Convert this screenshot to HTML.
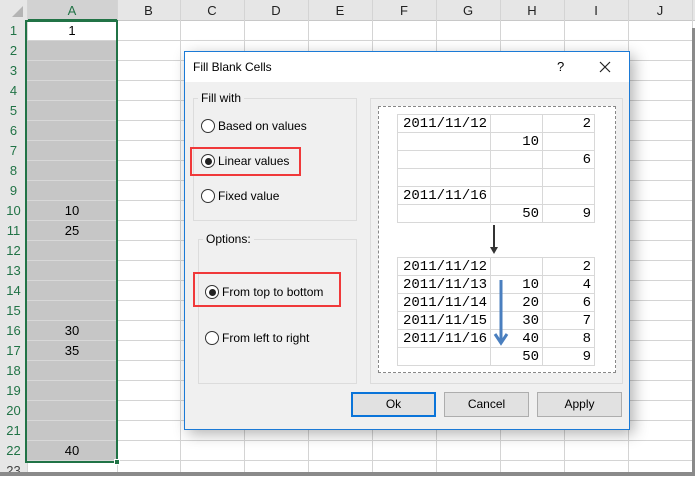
<!DOCTYPE html>
<html><head><style>
*{margin:0;padding:0;box-sizing:border-box}
body{width:695px;height:476px;overflow:hidden;background:#fff;position:relative;font-family:"Liberation Sans",sans-serif;font-size:12px;color:#000}
.a{position:absolute}
.vl{position:absolute;top:0;width:1px;height:472px;background:#d4d4d4}
.rh{position:absolute;left:0;width:27px;height:20px;text-align:center;line-height:20px;font-size:13px;color:#217346}
.ch{position:absolute;top:0;height:21px;line-height:21px;text-align:center;font-size:13px;color:#222}
.av{position:absolute;left:27px;width:90px;height:20px;text-align:center;line-height:20px;font-size:13px}
.grp{position:absolute;border:1px solid #dcdcdc}
.lab{position:absolute;background:#f0f0f0;padding:0 3px;font-size:12px}
.radio{position:absolute;font-size:12px;line-height:14px;padding-left:17px}
.radio:before{content:"";position:absolute;left:0;top:0;width:12px;height:12px;border:1px solid #333;border-radius:50%;background:#fff}
.radio.on:after{content:"";position:absolute;left:3.5px;top:3.5px;width:7px;height:7px;border-radius:50%;background:#222}
.red{position:absolute;border:2px solid #f0393a}
.pt{position:absolute;border-collapse:collapse;font-family:"Liberation Mono",monospace;font-size:14px}
.pt td{border:1px solid #d8d8d8;height:18px;padding:0 3px;text-align:right;line-height:16px}
.btn{position:absolute;height:25px;background:#e1e1e1;border:1px solid #adadad;text-align:center;line-height:23px;font-size:12px}
</style></head><body>
<div class="a" style="left:0;top:0;width:695px;height:21px;background:#e6e6e6;border-bottom:1px solid #c8c8c8"></div>
<div class="a" style="left:0;top:21px;width:27px;height:455px;background:#e6e6e6"></div>
<div class="a" style="left:27px;top:21px;width:665px;height:451px;background:repeating-linear-gradient(to bottom,transparent 0,transparent 19px,#d4d4d4 19px,#d4d4d4 20px)"></div>
<div class="a" style="left:27px;top:0;width:90px;height:21px;background:#d2d2d2;border-bottom:2px solid #217346"></div>
<div class="a" style="left:0;top:0;width:27px;height:21px;background:#e6e6e6"></div>
<svg class="a" style="left:12px;top:6px" width="12" height="12"><polygon points="11,0 11,11 0,11" fill="#b4b4b4"/></svg>
<div class="vl" style="left:27px"></div><div class="vl" style="left:117px"></div><div class="vl" style="left:180px"></div><div class="vl" style="left:244px"></div><div class="vl" style="left:308px"></div><div class="vl" style="left:372px"></div><div class="vl" style="left:436px"></div><div class="vl" style="left:500px"></div><div class="vl" style="left:564px"></div><div class="vl" style="left:628px"></div><div class="vl" style="left:692px"></div>
<div class="ch" style="left:27px;width:90px;color:#217346">A</div><div class="ch" style="left:117px;width:63px">B</div><div class="ch" style="left:180px;width:64px">C</div><div class="ch" style="left:244px;width:64px">D</div><div class="ch" style="left:308px;width:64px">E</div><div class="ch" style="left:372px;width:64px">F</div><div class="ch" style="left:436px;width:64px">G</div><div class="ch" style="left:500px;width:64px">H</div><div class="ch" style="left:564px;width:64px">I</div><div class="ch" style="left:628px;width:64px">J</div>
<div class="a" style="left:27px;top:41px;width:90px;height:420px;background:repeating-linear-gradient(to bottom,#c6c6c6 0,#c6c6c6 19px,#d8d8d8 19px,#d8d8d8 20px)"></div>
<div class="rh" style="top:21px">1</div><div class="rh" style="top:41px">2</div><div class="rh" style="top:61px">3</div><div class="rh" style="top:81px">4</div><div class="rh" style="top:101px">5</div><div class="rh" style="top:121px">6</div><div class="rh" style="top:141px">7</div><div class="rh" style="top:161px">8</div><div class="rh" style="top:181px">9</div><div class="rh" style="top:201px">10</div><div class="rh" style="top:221px">11</div><div class="rh" style="top:241px">12</div><div class="rh" style="top:261px">13</div><div class="rh" style="top:281px">14</div><div class="rh" style="top:301px">15</div><div class="rh" style="top:321px">16</div><div class="rh" style="top:341px">17</div><div class="rh" style="top:361px">18</div><div class="rh" style="top:381px">19</div><div class="rh" style="top:401px">20</div><div class="rh" style="top:421px">21</div><div class="rh" style="top:441px">22</div><div class="rh" style="top:461px;color:#444">23</div>
<div class="av" style="top:21px">1</div><div class="av" style="top:201px">10</div><div class="av" style="top:221px">25</div><div class="av" style="top:321px">30</div><div class="av" style="top:341px">35</div><div class="av" style="top:441px">40</div>
<div class="a" style="left:25px;top:20px;width:93px;height:443px;border:2px solid #217346"></div>
<div class="a" style="left:114px;top:459px;width:6px;height:6px;background:#217346;border:1px solid #fff"></div>
<div class="a" style="left:0;top:472px;width:695px;height:4px;background:#8a8a8a"></div>
<div class="a" style="left:692px;top:28px;width:3px;height:448px;background:#8a8a8a"></div>

<div class="a" style="left:184px;top:51px;width:446px;height:379px;background:#f0f0f0;border:1px solid #1b7ad6;box-shadow:4px 4px 14px rgba(0,0,0,.3)">
<div class="a" style="left:0;top:0;width:444px;height:30px;background:#fff"></div>
<div class="a" style="left:8px;top:8px;font-size:12px">Fill Blank Cells</div>
<div class="a" style="left:372px;top:7px;font-size:13px">?</div>
<svg class="a" style="left:414px;top:9px" width="12" height="12"><path d="M1 1L11 11M11 1L1 11" stroke="#222" stroke-width="1.2"/></svg>
</div>
<div class="grp" style="left:193px;top:98px;width:164px;height:123px"></div>
<div class="lab" style="left:198px;top:91px">Fill with</div>
<div class="radio" style="left:201px;top:119px">Based on values</div>
<div class="radio on" style="left:201px;top:154px">Linear values</div>
<div class="radio" style="left:201px;top:189px">Fixed value</div>
<div class="red" style="left:190px;top:147px;width:111px;height:29px"></div>
<div class="grp" style="left:198px;top:239px;width:159px;height:145px"></div>
<div class="lab" style="left:203px;top:232px">Options:</div>
<div class="radio on" style="left:205px;top:285px">From top to bottom</div>
<div class="radio" style="left:205px;top:331px">From left to right</div>
<div class="red" style="left:193px;top:272px;width:148px;height:35px"></div>

<div class="grp" style="left:370px;top:98px;width:253px;height:286px"></div>
<div class="a" style="left:378px;top:106px;width:238px;height:267px;background:#fff;border:1px dashed #888"></div>
<table class="pt" style="left:397px;top:114px">
<tr><td style="width:93px">2011/11/12</td><td style="width:52px"></td><td style="width:52px">2</td></tr>
<tr><td></td><td>10</td><td></td></tr>
<tr><td></td><td></td><td>6</td></tr>
<tr><td></td><td></td><td></td></tr>
<tr><td>2011/11/16</td><td></td><td></td></tr>
<tr><td></td><td>50</td><td>9</td></tr>
</table>
<svg class="a" style="left:488px;top:225px" width="12" height="32"><path d="M6 0V24" stroke="#333" stroke-width="2"/><path d="M2 22L6 29L10 22Z" fill="#333"/></svg>
<table class="pt" style="left:397px;top:257px">
<tr><td style="width:93px">2011/11/12</td><td style="width:52px"></td><td style="width:52px">2</td></tr>
<tr><td>2011/11/13</td><td>10</td><td>4</td></tr>
<tr><td>2011/11/14</td><td>20</td><td>6</td></tr>
<tr><td>2011/11/15</td><td>30</td><td>7</td></tr>
<tr><td>2011/11/16</td><td>40</td><td>8</td></tr>
<tr><td></td><td>50</td><td>9</td></tr>
</table>
<svg class="a" style="left:493px;top:280px" width="16" height="68"><path d="M8 0V62" stroke="#4a7fbf" stroke-width="3"/><path d="M2 54L8 63L14 54" stroke="#4a7fbf" stroke-width="3" fill="none"/></svg>
<div class="btn" style="left:351px;top:392px;width:85px;border:2px solid #0a74d9;line-height:21px">Ok</div>
<div class="btn" style="left:444px;top:392px;width:85px">Cancel</div>
<div class="btn" style="left:537px;top:392px;width:85px">Apply</div>
</body></html>
